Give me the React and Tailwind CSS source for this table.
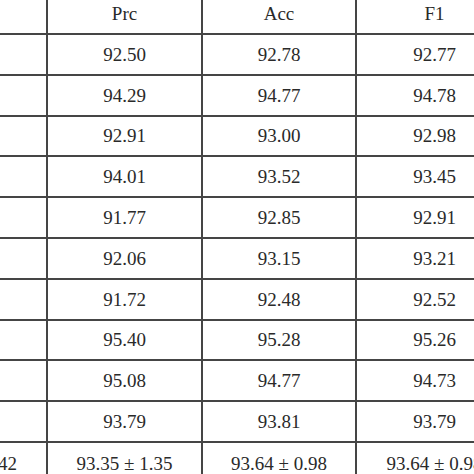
const rows = [
  ["Rec", "Prc", "Acc", "F1"],
  ["93.05", "92.50", "92.78", "92.77"],
  ["95.27", "94.29", "94.77", "94.78"],
  ["93.05", "92.91", "93.00", "92.98"],
  ["92.91", "94.01", "93.52", "93.45"],
  ["94.05", "91.77", "92.85", "92.91"],
  ["94.36", "92.06", "93.15", "93.21"],
  ["93.33", "91.72", "92.48", "92.52"],
  ["95.16", "95.40", "95.28", "95.26"],
  ["94.39", "95.08", "94.77", "94.73"],
  ["93.79", "93.79", "93.81", "93.79"],
  ["93.94 ± 1.42", "93.35 ± 1.35", "93.64 ± 0.98", "93.64 ± 0.98"],
];

const widths = ["w-[156px]", "w-[155px]", "w-[154px]", "w-[155px]"];

export default function App() {
  return (
    <div className="w-[474px] h-[474px] overflow-hidden bg-white">
      <div className="ml-[-108px] mt-[-5.8px] flex flex-col text-[#2a2a2a] text-[19px] leading-none font-['Liberation_Serif','Times_New_Roman',serif]">
        {rows.map((r, i) => (
          <div key={i} className="flex h-[40.8px] shrink-0">
            {r.map((c, j) => (
              <div
                key={j}
                className={`${widths[j]} shrink-0 h-full flex items-center justify-center whitespace-nowrap border-[#454545] ${
                  j < 3 ? "border-r-2" : ""
                } ${i < rows.length - 1 ? "border-b-2" : ""}`}
              >
                {c}
              </div>
            ))}
          </div>
        ))}
      </div>
    </div>
  );
}
